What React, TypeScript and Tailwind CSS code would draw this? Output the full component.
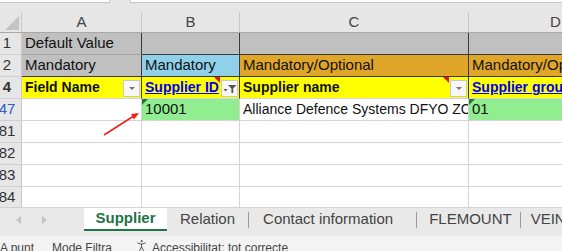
import { PersonStanding } from 'lucide-react';

const dark = 'border-[#3a3a3a]';
const grid = 'border-[#d4d4d4]';

function RowNum({ n, blue }: { n: string; blue?: boolean }) {
  return (
    <div className="relative w-[22px] h-full shrink-0 flex items-center bg-[#e6e6e6] border-r border-b border-r-[#c8c8c8] border-b-[#d0d0d0] overflow-hidden">
      <div className={`w-[14px] flex justify-center text-[15px] ${blue ? 'text-[#2f5ccf]' : 'text-[#333]'}`}>
        <span className="whitespace-nowrap">{n}</span>
      </div>
    </div>
  );
}

function Dropdown({ filter }: { filter?: boolean }) {
  return (
    <div className="absolute right-[1px] top-[3px] w-[17px] h-[17px] bg-[#f7f7f7] border border-[#c8c8c8] flex items-center justify-center">
      {filter ? (
        <svg width="14" height="10" viewBox="0 0 14 10">
          <polygon points="0.5,5 4.5,5 2.5,7.5" fill="#555" />
          <polygon points="5,1 13.5,1 10.2,4.6 10.2,9 8.4,9 8.4,4.6" fill="#555" />
        </svg>
      ) : (
        <div className="w-0 h-0 border-l-[3px] border-r-[3px] border-t-[3px] border-l-transparent border-r-transparent border-t-[#777]" />
      )}
    </div>
  );
}

function RedMark({ right }: { right: string }) {
  return (
    <div
      className={`absolute top-0 ${right} w-0 h-0 border-l-[6px] border-l-transparent border-t-[6px] border-t-[#e8141a]`}
    />
  );
}

function GreenMark() {
  return (
    <div className="absolute top-0 left-0 w-0 h-0 border-r-[6px] border-r-transparent border-t-[6px] border-t-[#1f7a3a]" />
  );
}

const cell =
  'relative h-full shrink-0 flex items-center px-[3px] overflow-hidden whitespace-nowrap border-r border-b';

export default function App() {
  const rows = ['81', '82', '83', '84'];

  return (
    <div
      className="relative w-[562px] h-[251px] overflow-hidden bg-white text-[#111]"
      style={{ fontFamily: '"Liberation Sans", Arial, sans-serif' }}
    >
      {/* formula bar bottom */}
      <div className="h-[12px] bg-[#e6e6e6]">
        <div className="flex h-[3px]">
          <div className="w-[110px] bg-white border-b border-r border-[#c6c6c6]" />
          <div className="w-[20px]" />
          <div className="flex-1 bg-white border-b border-l border-[#c6c6c6]" />
        </div>
      </div>

      {/* column headers */}
      <div className="flex h-[21px] bg-[#e6e6e6] border-b border-[#a8a8a8] text-[15px] text-[#444]">
        <div className="w-[22px] shrink-0 border-r border-[#c8c8c8] flex items-end justify-end pb-[2px] pr-[2px]">
          <div className="w-0 h-0 border-l-[14px] border-l-transparent border-b-[14px] border-b-[#c4c4c4]" />
        </div>
        <div className="w-[120px] shrink-0 border-r border-[#c8c8c8] flex items-center justify-center">A</div>
        <div className="w-[98px] shrink-0 border-r border-[#c8c8c8] flex items-center justify-center">B</div>
        <div className="w-[229px] shrink-0 border-r border-[#c8c8c8] flex items-center justify-center">C</div>
        <div className="w-[174px] shrink-0 border-r border-[#c8c8c8] flex items-center justify-center">D</div>
      </div>

      {/* row 1 */}
      <div className="flex h-[22px] text-[15px]">
        <RowNum n="1" />
        <div className={`${cell} w-[120px] bg-[#c0c0c0] border-r-[#3a3a3a] border-b-[#a6a6a6]`}>Default Value</div>
        <div className={`${cell} w-[98px] bg-[#c0c0c0] ${dark}`} />
        <div className={`${cell} w-[229px] bg-[#c0c0c0] ${dark}`} />
        <div className={`${cell} w-[174px] bg-[#c0c0c0] ${dark}`} />
      </div>

      {/* row 2 */}
      <div className="flex h-[22px] text-[15px]">
        <RowNum n="2" />
        <div className={`${cell} w-[120px] bg-[#c0c0c0] border-r-[#3a3a3a] border-b-[#3a3a3a]`}>Mandatory</div>
        <div className={`${cell} w-[98px] bg-[#8fd0ea] ${dark}`}>Mandatory</div>
        <div className={`${cell} w-[229px] bg-[#e0a62a] ${dark}`}>Mandatory/Optional</div>
        <div className={`${cell} w-[174px] bg-[#e0a62a] ${dark}`}>Mandatory/Optional</div>
      </div>

      {/* row 4 */}
      <div className="flex h-[22px] text-[14px] font-bold">
        <RowNum n="4" />
        <div className={`${cell} w-[120px] bg-[#ffff00] border-r-[#3a3a3a] border-b-[#d4d4d4]`}>
          Field Name
          <Dropdown />
        </div>
        <div className={`${cell} w-[98px] bg-[#ffff00] border-r-[#3a3a3a] border-b-[#d4d4d4]`}>
          <span className="text-[#0000ee] underline">Supplier ID</span>
          <RedMark right="right-[19px]" />
          <Dropdown filter />
        </div>
        <div className={`${cell} w-[229px] bg-[#ffff00] border-r-[#3a3a3a] border-b-[#d4d4d4]`}>
          Supplier name
          <RedMark right="right-[19px]" />
          <Dropdown />
        </div>
        <div className={`${cell} w-[174px] bg-[#ffff00] border-r-[#3a3a3a] border-b-[#d4d4d4]`}>
          <span className="text-[#0000ee] underline">Supplier group</span>
        </div>
      </div>

      {/* row 47 */}
      <div className="flex h-[22px] text-[15px]">
        <RowNum n="47" blue />
        <div className={`${cell} w-[120px] ${grid}`} />
        <div className={`${cell} w-[98px] bg-[#90ee90] ${grid}`}>
          <GreenMark />
          10001
        </div>
        <div className={`${cell} w-[229px] text-[14px] ${grid}`}>Alliance Defence Systems DFYO ZOO</div>
        <div className={`${cell} w-[174px] bg-[#90ee90] ${grid}`}>
          <GreenMark />
          01
        </div>
      </div>

      {rows.map((r, i) => (
        <div key={r} className={`flex text-[15px] ${i === rows.length - 1 ? 'h-[21px]' : 'h-[22px]'}`}>
          <RowNum n={r} />
          <div className={`${cell} w-[120px] ${grid}`} />
          <div className={`${cell} w-[98px] ${grid}`} />
          <div className={`${cell} w-[229px] ${grid}`} />
          <div className={`${cell} w-[174px] ${grid}`} />
        </div>
      ))}

      {/* sheet tabs */}
      <div className="flex items-start h-[28px] bg-[#e9e9e9] text-[15px] text-[#444]">
        <div className="w-[84px] shrink-0 h-[23px] flex items-center">
          <div className="ml-[16px] w-0 h-0 border-t-[4px] border-b-[4px] border-r-[5px] border-t-transparent border-b-transparent border-r-[#c4c4c4]" />
          <div className="ml-[21px] w-0 h-0 border-t-[4px] border-b-[4px] border-l-[5px] border-t-transparent border-b-transparent border-l-[#c4c4c4]" />
        </div>
        <div className="w-[83px] shrink-0 h-[23px] bg-white border-b-2 border-[#217346] flex items-center justify-center font-bold text-[#217346]">
          Supplier
        </div>
        <div className="h-[23px] flex items-center whitespace-nowrap">
          <span className="px-[13px]">Relation</span>
          <span className="w-px h-[16px] bg-[#9a9a9a]" />
          <span className="pl-[14px] pr-[23px]">Contact information</span>
          <span className="w-px h-[16px] bg-[#9a9a9a]" />
          <span className="pl-[12px] pr-[8px]">FLEMOUNT</span>
          <span className="w-px h-[16px] bg-[#9a9a9a]" />
          <span className="px-[10px]">VEINTE</span>
        </div>
      </div>

      {/* status bar */}
      <div className="flex items-start h-[15px] bg-[#f3f3f3] text-[12px] text-[#444] whitespace-nowrap pt-[3px]">
        <span className="w-[52px] shrink-0">A punt</span>
        <span className="w-[82px] shrink-0">Mode Filtra</span>
        <PersonStanding className="w-[15px] h-[15px] text-[#555] -mt-[1px]" strokeWidth={1.6} />
        <span className="ml-[3px]">Accessibilitat: tot correcte</span>
      </div>

      {/* red arrow annotation */}
      <svg className="absolute left-0 top-0 pointer-events-none" width="562" height="251">
        <line x1="104" y1="135" x2="133" y2="116.5" stroke="#e8231f" strokeWidth="1.6" />
        <polygon points="139,113 131,114 134,119.5" fill="#e8231f" />
      </svg>
    </div>
  );
}
